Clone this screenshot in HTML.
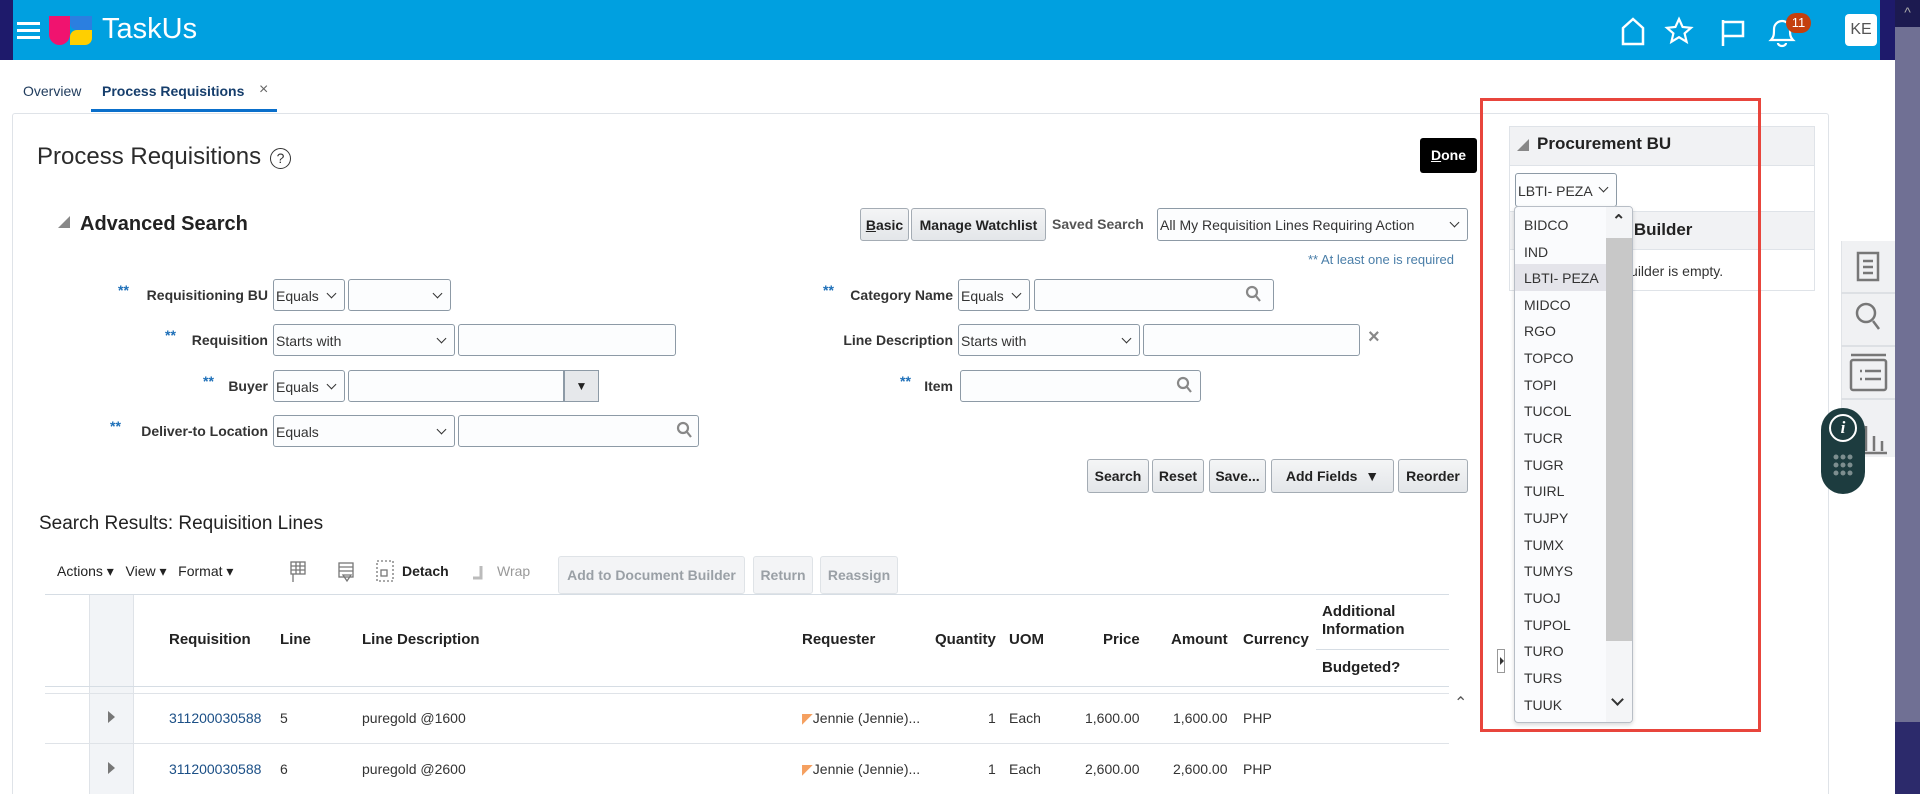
<!DOCTYPE html>
<html style="width:1920px;height:794px;overflow:hidden"><head><meta charset="utf-8"><style>
*{box-sizing:border-box;margin:0;padding:0}
body{width:1920px;height:794px;position:relative;overflow:hidden;background:#fff;font-family:"Liberation Sans",Arial,sans-serif;color:#333}
.a{position:absolute}
.lbl{position:absolute;font-size:14px;font-weight:bold;color:#333;text-align:right;white-space:nowrap}
.req{color:#1d6fb8;font-weight:bold;font-size:14px;position:absolute}
.sel{position:absolute;height:32px;border:1px solid #8d9aa6;border-radius:3px;background:#fcfdfe;font-size:14px;padding:8px 2px;color:#333;white-space:nowrap}
.sel:after{content:"";position:absolute;right:9px;top:10px;width:6px;height:6px;border-right:1.6px solid #333;border-bottom:1.6px solid #333;transform:rotate(45deg)}
.inp{position:absolute;height:32px;border:1px solid #8d9aa6;border-radius:3px;background:#fcfdfe}
.btn{position:absolute;height:34px;border:1px solid #a4acb4;border-radius:3px;background:linear-gradient(#f4f5f6,#e3e6e9);font-size:14px;font-weight:bold;color:#222;text-align:center;line-height:32px;white-space:nowrap}
.dis{position:absolute;height:38px;border:1px solid #dfe3e7;border-radius:3px;background:#f3f4f6;font-size:14px;font-weight:bold;color:#9aa0a6;text-align:center;line-height:36px}
.th{position:absolute;font-size:15px;font-weight:bold;color:#222;white-space:nowrap}
.td{position:absolute;font-size:14px;color:#333;white-space:nowrap}
.dd{position:absolute;left:9px;font-size:14px;color:#333}
</style></head><body>

<div class="a" style="left:0;top:0;width:1880px;height:60px;background:#00a0e0"></div>
<div class="a" style="left:0;top:0;width:13px;height:60px;background:#1e1a6b"></div>
<div class="a" style="left:1880px;top:0;width:15px;height:60px;background:#1e1a6b"></div>
<div class="a" style="left:1895px;top:0;width:25px;height:722px;background:#707094"></div>
<div class="a" style="left:1895px;top:0;width:25px;height:27px;background:#1c1a50;color:#aaa;font-size:14px;text-align:center;line-height:24px">^</div>
<div class="a" style="left:1895px;top:722px;width:25px;height:72px;background:#2c2a6b"></div>
<div class="a" style="left:17px;top:22px;width:23px;height:3px;background:#fff;box-shadow:0 7px 0 #fff,0 14px 0 #fff"></div>
<div class="a" style="left:49px;top:16px;width:21px;height:29px;background:#f0136f;border-radius:0 0 11px 11px"></div>
<div class="a" style="left:70px;top:16px;width:22px;height:14px;background:#2b7fe0;border-radius:0 0 0 7px"></div>
<div class="a" style="left:70px;top:30px;width:22px;height:15px;background:#ffcf00;border-radius:7px 0 7px 0"></div>
<div class="a" style="left:102px;top:13px;font-size:29px;color:#fff">TaskUs</div>
<svg class="a" style="left:1615px;top:14px" width="270" height="36" viewBox="0 0 270 36" fill="none" stroke="#fff" stroke-width="2.5">
<path d="M8 30V14L18 5L28 14V30Z"/>
<path d="M64 5l3.6 8 8.4.8-6.4 5.6 2 8.4-7.6-4.6-7.6 4.6 2-8.4-6.4-5.6 8.4-.8z" stroke-width="2.2"/>
<path d="M108 32V6M108 8h20v14h-20"/>
<path d="M156 26c3-3 3-6 3-11a8 8 0 0116 0c0 5 0 8 3 11z M163 29a4 3 0 008 0" stroke-width="2.2"/>
</svg>
<div class="a" style="left:1786px;top:13px;width:25px;height:20px;border-radius:10px;background:#c4400e;color:#fff;font-size:13px;text-align:center;line-height:20px">11</div>
<div class="a" style="left:1845px;top:14px;width:32px;height:32px;border-radius:4px;background:#fff;color:#555;font-size:16px;text-align:center;line-height:32px">KE</div>

<div class="a" style="left:23px;top:83px;font-size:14px;color:#1f3b5c">Overview</div>
<div class="a" style="left:102px;top:83px;font-size:14px;font-weight:bold;color:#163e6c">Process Requisitions</div>
<div class="a" style="left:259px;top:81px;font-size:16px;color:#666">×</div>
<div class="a" style="left:91px;top:109px;width:186px;height:3px;background:#0a6fcb"></div>

<div class="a" style="left:12px;top:113px;width:1817px;height:690px;border:1px solid #dfe3e8;border-radius:3px"></div>

<div class="a" style="left:37px;top:143px;font-size:24px;color:#2b2b2b">Process Requisitions</div>
<div class="a" style="left:270px;top:148px;width:21px;height:21px;border:1.6px solid #333;border-radius:50%;font-size:14px;text-align:center;line-height:18px;color:#333">?</div>
<div class="a" style="left:1420px;top:138px;width:57px;height:35px;background:#000;border-radius:3px;color:#fff;font-weight:bold;font-size:14px;text-align:center;line-height:35px"><u>D</u>one</div>

<div class="a" style="left:58px;top:216px;width:0;height:0;border-left:12px solid transparent;border-bottom:12px solid #888"></div>
<div class="a" style="left:80px;top:213px;font-size:20px;font-weight:bold;color:#222">Advanced Search</div>

<div class="btn" style="left:860px;top:208px;width:49px;height:33px"><u>B</u>asic</div>
<div class="btn" style="left:911px;top:208px;width:135px;height:33px">Manage Watchlist</div>
<div class="lbl" style="left:1052px;top:216px;color:#555">Saved Search</div>
<div class="sel" style="left:1157px;top:208px;width:311px;height:33px">All My Requisition Lines Requiring Action</div>
<div class="a" style="left:1308px;top:252px;font-size:13px;color:#4a7ea8">** At least one is required</div>

<span class="req" style="left:118px;top:282px">**</span><div class="lbl" style="right:1652px;top:287px">Requisitioning BU</div>
<div class="sel" style="left:273px;top:279px;width:72px">Equals</div>
<div class="sel" style="left:348px;top:279px;width:103px"></div>

<span class="req" style="left:165px;top:327px">**</span><div class="lbl" style="right:1652px;top:332px">Requisition</div>
<div class="sel" style="left:273px;top:324px;width:182px">Starts with</div>
<div class="inp" style="left:458px;top:324px;width:218px"></div>

<span class="req" style="left:203px;top:373px">**</span><div class="lbl" style="right:1652px;top:378px">Buyer</div>
<div class="sel" style="left:273px;top:370px;width:72px">Equals</div>
<div class="inp" style="left:348px;top:370px;width:216px;border-radius:3px 0 0 3px"></div>
<div class="a" style="left:564px;top:370px;width:35px;height:32px;border:1px solid #8d9aa6;background:#e6e8eb;font-size:12px;text-align:center;line-height:30px;color:#222">▼</div>

<span class="req" style="left:110px;top:418px">**</span><div class="lbl" style="right:1652px;top:423px">Deliver-to Location</div>
<div class="sel" style="left:273px;top:415px;width:182px">Equals</div>
<div class="inp" style="left:458px;top:415px;width:241px"></div>

<span class="req" style="left:823px;top:282px">**</span><div class="lbl" style="right:967px;top:287px">Category Name</div>
<div class="sel" style="left:958px;top:279px;width:72px">Equals</div>
<div class="inp" style="left:1034px;top:279px;width:240px"></div>
<div class="lbl" style="right:967px;top:332px">Line Description</div>
<div class="sel" style="left:958px;top:324px;width:182px">Starts with</div>
<div class="inp" style="left:1143px;top:324px;width:217px"></div>
<div class="a" style="left:1368px;top:326px;font-size:20px;font-weight:bold;color:#888">×</div>
<span class="req" style="left:900px;top:373px">**</span><div class="lbl" style="right:967px;top:378px">Item</div>
<div class="inp" style="left:960px;top:370px;width:241px"></div>

<svg class="a" style="left:0;top:0" width="1300" height="450" fill="none" stroke="#888" stroke-width="2.2">
<circle cx="1252" cy="292" r="5"/><path d="M1256 296l4 5"/>
<circle cx="1183" cy="383" r="5"/><path d="M1187 387l4 5"/>
<circle cx="683" cy="428" r="5"/><path d="M687 432l4 5"/>
</svg>

<div class="btn" style="left:1087px;top:459px;width:62px">Search</div>
<div class="btn" style="left:1152px;top:459px;width:52px">Reset</div>
<div class="btn" style="left:1209px;top:459px;width:57px">Save...</div>
<div class="btn" style="left:1271px;top:459px;width:123px">Add Fields &nbsp;▼</div>
<div class="btn" style="left:1398px;top:459px;width:70px">Reorder</div>

<div class="a" style="left:39px;top:513px;font-size:19px;color:#222">Search Results: Requisition Lines</div>

<div class="a" style="left:57px;top:563px;font-size:14px;color:#222;white-space:nowrap">Actions ▾&nbsp;&nbsp; View ▾&nbsp;&nbsp; Format ▾</div>
<svg class="a" style="left:285px;top:558px" width="200" height="28" fill="none" stroke="#777" stroke-width="1.3">
<rect x="6" y="4" width="14" height="12"/><path d="M6 8h14M6 12h14M11 4v12M15 4v12M8 16v8"/>
<rect x="54" y="5" width="14" height="14"/><path d="M54 9h14M54 13h14M58 17l4 6 4-6z"/>
<rect x="92" y="3" width="16" height="20" stroke-dasharray="2 2"/><rect x="96" y="12" width="6" height="6"/>
<path d="M196 8v12h-8" stroke="#bbb" stroke-width="3"/>
</svg>
<div class="a" style="left:402px;top:563px;font-size:14px;font-weight:bold;color:#222">Detach</div>
<div class="a" style="left:497px;top:563px;font-size:14px;color:#999">Wrap</div>
<div class="dis" style="left:558px;top:556px;width:187px">Add to Document Builder</div>
<div class="dis" style="left:753px;top:556px;width:60px">Return</div>
<div class="dis" style="left:820px;top:556px;width:78px">Reassign</div>

<div class="a" style="left:45px;top:594px;width:1404px;height:1px;background:#d6dde4"></div>
<div class="a" style="left:89px;top:595px;width:45px;height:199px;background:#f2f4f7;border-left:1px solid #dfe3e8;border-right:1px solid #dfe3e8"></div>
<div class="th" style="left:169px;top:631px">Requisition</div>
<div class="th" style="left:280px;top:631px">Line</div>
<div class="th" style="left:362px;top:631px">Line Description</div>
<div class="th" style="left:802px;top:631px">Requester</div>
<div class="th" style="left:935px;top:631px">Quantity</div>
<div class="th" style="left:1009px;top:631px">UOM</div>
<div class="th" style="left:1103px;top:631px">Price</div>
<div class="th" style="left:1171px;top:631px">Amount</div>
<div class="th" style="left:1243px;top:631px">Currency</div>
<div class="th" style="left:1322px;top:603px;line-height:18px">Additional<br>Information</div>
<div class="a" style="left:1316px;top:649px;width:133px;height:1px;background:#d6dde4"></div>
<div class="th" style="left:1322px;top:659px">Budgeted?</div>
<div class="a" style="left:45px;top:686px;width:1404px;height:1px;background:#d6dde4"></div>
<div class="a" style="left:45px;top:693px;width:1404px;height:1px;background:#dfe3e8"></div>
<div class="a" style="left:45px;top:743px;width:1404px;height:1px;background:#dfe3e8"></div>
<div class="a" style="left:1454px;top:693px;font-size:16px;color:#555">⌃</div>

<div class="a" style="left:108px;top:711px;border-left:7px solid #777;border-top:6px solid transparent;border-bottom:6px solid transparent"></div>
<div class="a" style="left:108px;top:762px;border-left:7px solid #777;border-top:6px solid transparent;border-bottom:6px solid transparent"></div>
<div class="td" style="left:169px;top:710px;color:#1b4f86">311200030588</div>
<div class="td" style="left:280px;top:710px">5</div>
<div class="td" style="left:362px;top:710px">puregold @1600</div>
<div class="td" style="left:802px;top:710px"><span style="color:#f5a060">◤</span>Jennie (Jennie)...</div>
<div class="td" style="left:988px;top:710px">1</div>
<div class="td" style="left:1009px;top:710px">Each</div>
<div class="td" style="left:1085px;top:710px">1,600.00</div>
<div class="td" style="left:1173px;top:710px">1,600.00</div>
<div class="td" style="left:1243px;top:710px">PHP</div>
<div class="td" style="left:169px;top:761px;color:#1b4f86">311200030588</div>
<div class="td" style="left:280px;top:761px">6</div>
<div class="td" style="left:362px;top:761px">puregold @2600</div>
<div class="td" style="left:802px;top:761px"><span style="color:#f5a060">◤</span>Jennie (Jennie)...</div>
<div class="td" style="left:988px;top:761px">1</div>
<div class="td" style="left:1009px;top:761px">Each</div>
<div class="td" style="left:1085px;top:761px">2,600.00</div>
<div class="td" style="left:1173px;top:761px">2,600.00</div>
<div class="td" style="left:1243px;top:761px">PHP</div>

<div class="a" style="left:1509px;top:126px;width:306px;height:165px;border:1px solid #dfe3e8"></div>
<div class="a" style="left:1509px;top:126px;width:306px;height:40px;background:#f1f2f4;border:1px solid #dfe3e8"></div>
<div class="a" style="left:1517px;top:139px;border-left:12px solid transparent;border-bottom:12px solid #888"></div>
<div class="a" style="left:1537px;top:134px;font-size:17px;font-weight:bold;color:#222">Procurement BU</div>
<div class="sel" style="left:1515px;top:173px;width:102px;height:34px;padding:9px 2px">LBTI- PEZA</div>
<div class="a" style="left:1509px;top:211px;width:306px;height:39px;background:#f1f2f4;border:1px solid #dfe3e8"></div>
<div class="a" style="left:1546px;top:220px;font-size:17px;font-weight:bold;color:#222">Document Builder</div>
<div class="a" style="left:1553px;top:263px;font-size:14px;color:#333">Document Builder is empty.</div>

<div class="a" style="left:1514px;top:206px;width:119px;height:517px;background:#fafbfd;border:1px solid #b8bec6;border-radius:4px;overflow:hidden;box-shadow:0 2px 4px rgba(0,0,0,.15)">
<div class="a" style="left:0;top:57px;width:91px;height:27px;background:#e4e4ea"></div>
<div class="a" style="left:91px;top:0;width:27px;height:517px;background:#f4f5f7"></div>
<div class="a" style="left:91px;top:31px;width:27px;height:403px;background:#c8c8c8"></div>
<div class="a" style="left:97px;top:4px;font-size:16px;font-weight:bold;color:#333">⌃</div>
<div class="a" style="left:98px;top:488px;width:9px;height:9px;border-right:2px solid #333;border-bottom:2px solid #333;transform:rotate(45deg)"></div>
<div class="dd" style="top:10px">BIDCO</div>
<div class="dd" style="top:37px">IND</div>
<div class="dd" style="top:63px">LBTI- PEZA</div>
<div class="dd" style="top:90px">MIDCO</div>
<div class="dd" style="top:116px">RGO</div>
<div class="dd" style="top:143px">TOPCO</div>
<div class="dd" style="top:170px">TOPI</div>
<div class="dd" style="top:196px">TUCOL</div>
<div class="dd" style="top:223px">TUCR</div>
<div class="dd" style="top:250px">TUGR</div>
<div class="dd" style="top:276px">TUIRL</div>
<div class="dd" style="top:303px">TUJPY</div>
<div class="dd" style="top:330px">TUMX</div>
<div class="dd" style="top:356px">TUMYS</div>
<div class="dd" style="top:383px">TUOJ</div>
<div class="dd" style="top:410px">TUPOL</div>
<div class="dd" style="top:436px">TURO</div>
<div class="dd" style="top:463px">TURS</div>
<div class="dd" style="top:490px">TUUK</div>
</div>
<div class="a" style="left:1497px;top:649px;width:8px;height:24px;border:1px solid #999;background:#fff"></div>
<div class="a" style="left:1500px;top:657px;border-left:4px solid #333;border-top:4px solid transparent;border-bottom:4px solid transparent"></div>

<div class="a" style="left:1480px;top:98px;width:281px;height:634px;border:3px solid #e8453c"></div>

<div class="a" style="left:1841px;top:241px;width:54px;height:216px;background:#f0f1f3;border-left:1px solid #e0e3e7"></div>
<svg class="a" style="left:1841px;top:241px" width="54" height="216" fill="none" stroke="#777" stroke-width="2.5">
<rect x="17" y="12" width="20" height="27"/><path d="M22 20h10M22 26h10M22 32h10"/>
<path d="M0 52h54M0 105h54M0 158h54" stroke="#dde0e4" stroke-width="2"/>
<circle cx="25" cy="72" r="9"/><path d="M32 80l6 8"/>
<rect x="10" y="119" width="35" height="30" rx="2"/><path d="M10 114h35M19 130h2M19 138h2M24 130h16M24 138h16"/>
<path d="M25 185v25M33 195v15M41 200v10M14 212h32"/>
</svg>
<div class="a" style="left:1821px;top:408px;width:44px;height:86px;border-radius:22px;background:#1d3c3f"></div>
<div class="a" style="left:1829px;top:414px;width:28px;height:28px;border:2px solid #fff;border-radius:50%;color:#fff;font:italic bold 17px 'Liberation Serif',serif;text-align:center;line-height:24px">i</div>
<svg class="a" style="left:1832px;top:453px" width="22" height="26" fill="#7d8e8f"><circle cx="4" cy="4" r="2.5"/><circle cx="11" cy="4" r="2.5"/><circle cx="18" cy="4" r="2.5"/><circle cx="4" cy="12" r="2.5"/><circle cx="11" cy="12" r="2.5"/><circle cx="18" cy="12" r="2.5"/><circle cx="4" cy="20" r="2.5"/><circle cx="11" cy="20" r="2.5"/><circle cx="18" cy="20" r="2.5"/></svg>

</body></html>
